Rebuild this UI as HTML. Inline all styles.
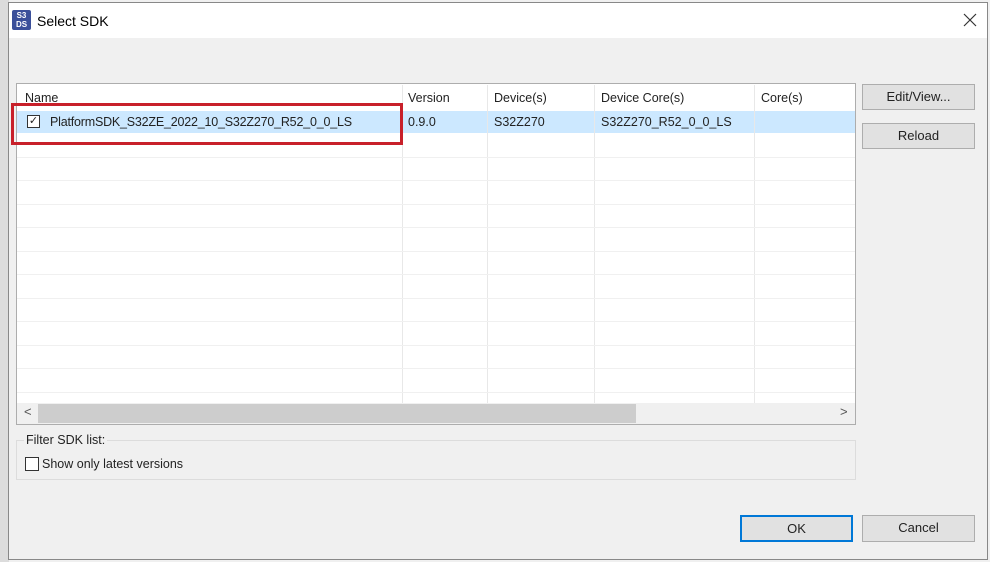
<!DOCTYPE html>
<html><head><style>
*{box-sizing:border-box;margin:0;padding:0}
body{width:990px;height:562px;background:#f0f0f0;font-family:"Liberation Sans",sans-serif;font-size:12.5px;color:#222;position:relative;overflow:hidden}
.a{position:absolute}
.btn{position:absolute;background:#e1e1e1;border:1px solid #adadad;text-align:center;line-height:24px;font-size:13px;color:#222}
.vl{position:absolute;top:85px;height:318px;width:1px;background:#e8e8e8}
.hl{position:absolute;left:17px;width:838px;height:1px;background:#f0f0f0}
</style></head><body>
<div class="a" style="left:0;top:0;width:9px;height:562px;background:#dcdcdc"></div>
<div class="a" style="left:8px;top:2px;width:980px;height:558px;border:1px solid #888;background:#f0f0f0"></div>
<div class="a" style="left:9px;top:3px;width:978px;height:35px;background:#fff"></div>
<div class="a" style="left:12px;top:10px;width:19px;height:20px;background:#3a4f9a;border-radius:2px;color:#fff;font-size:8px;line-height:9px;text-align:center;font-weight:bold;padding-top:1px">S3<br>DS</div>
<div class="a" style="left:37px;top:13px;font-size:14px;color:#000">Select SDK</div>
<svg class="a" style="left:963px;top:13px" width="14" height="14"><path d="M1 1L13 13M13 1L1 13" stroke="#333" stroke-width="1.2"/></svg>

<div class="a" style="left:16px;top:83px;width:840px;height:342px;border:1px solid #adadad;background:#fff"></div>
<div class="a" style="left:17px;top:111px;width:838px;height:22px;background:#cce8ff"></div>
<div class="vl" style="left:402px"></div><div class="vl" style="left:487px"></div><div class="vl" style="left:594px"></div><div class="vl" style="left:754px"></div>
<div class="hl" style="top:157px"></div><div class="hl" style="top:180px"></div><div class="hl" style="top:204px"></div><div class="hl" style="top:227px"></div><div class="hl" style="top:251px"></div><div class="hl" style="top:274px"></div><div class="hl" style="top:298px"></div><div class="hl" style="top:321px"></div><div class="hl" style="top:345px"></div><div class="hl" style="top:368px"></div><div class="hl" style="top:392px"></div>
<div class="a" style="left:25px;top:91px">Name</div>
<div class="a" style="left:408px;top:91px">Version</div>
<div class="a" style="left:494px;top:91px">Device(s)</div>
<div class="a" style="left:601px;top:91px">Device Core(s)</div>
<div class="a" style="left:761px;top:91px">Core(s)</div>
<div class="a" style="left:27px;top:115px;width:13px;height:13px;border:1px solid #333;background:#fff;font-size:11px;line-height:11px;text-align:center">✓</div>
<div class="a" style="left:50px;top:115px;letter-spacing:-0.2px">PlatformSDK_S32ZE_2022_10_S32Z270_R52_0_0_LS</div>
<div class="a" style="left:408px;top:115px">0.9.0</div>
<div class="a" style="left:494px;top:115px">S32Z270</div>
<div class="a" style="left:601px;top:115px">S32Z270_R52_0_0_LS</div>
<div class="a" style="left:11px;top:103px;width:392px;height:42px;border:3px solid #c8202a"></div>
<div class="a" style="left:17px;top:403px;width:838px;height:21px;background:#f0f0f0"></div>
<div class="a" style="left:38px;top:404px;width:598px;height:19px;background:#cdcdcd"></div>
<div class="a" style="left:24px;top:404px;font-size:13px;color:#555">&lt;</div>
<div class="a" style="left:840px;top:404px;font-size:13px;color:#555">&gt;</div>

<div class="a" style="left:16px;top:440px;width:840px;height:40px;border:1px solid #dcdcdc"></div>
<div class="a" style="left:24px;top:433px;background:#f0f0f0;padding:0 2px">Filter SDK list:</div>
<div class="a" style="left:25px;top:457px;width:14px;height:14px;border:1px solid #333;background:#fff"></div>
<div class="a" style="left:42px;top:457px">Show only latest versions</div>

<div class="btn" style="left:862px;top:84px;width:113px;height:26px">Edit/View...</div>
<div class="btn" style="left:862px;top:123px;width:113px;height:26px">Reload</div>
<div class="btn" style="left:740px;top:515px;width:113px;height:27px;border:2px solid #0078d7;line-height:23px">OK</div>
<div class="btn" style="left:862px;top:515px;width:113px;height:27px">Cancel</div>
</body></html>
